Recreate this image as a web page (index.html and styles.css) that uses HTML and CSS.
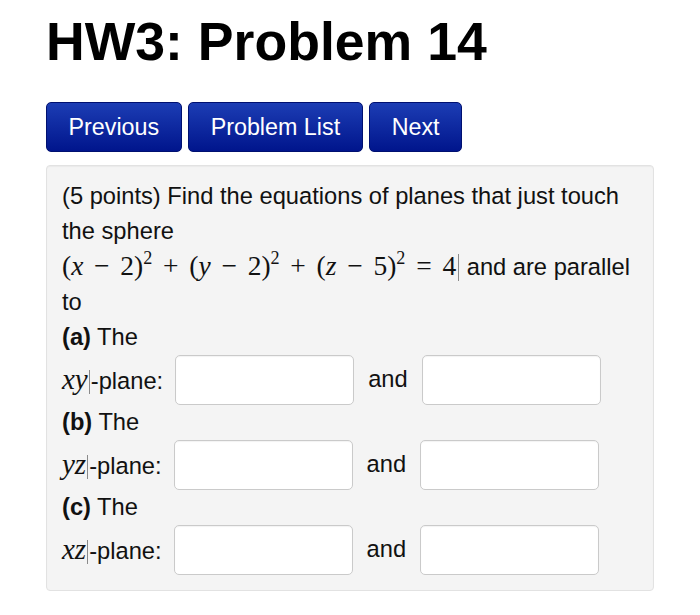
FILE: index.html
```html
<!DOCTYPE html>
<html lang="en">
<head>
<meta charset="utf-8">
<title>HW3: Problem 14</title>
<link rel="stylesheet" href="styles.css">
</head>
<body>
<div class="page">
  <h1 class="title">HW3: Problem 14</h1>
  <nav class="nav">
    <a class="btn" href="#">Previous</a>
    <a class="btn" href="#">Problem List</a>
    <a class="btn" href="#">Next</a>
  </nav>
  <div class="problem">
    <p class="text">(5 points) Find the equations of planes that just touch the sphere<br><span class="math">(<i>x</i><span class="op">−</span>2)<sup>2</sup><span class="op">+</span>(<i>y</i><span class="op">−</span>2)<sup>2</sup><span class="op">+</span>(<i>z</i><span class="op">−</span>5)<sup>2</sup><span class="op">=</span>4</span><span class="bar tall"></span> and are parallel to</p>
    <p class="text"><b>(a)</b> The</p>
    <div class="row">
      <span class="label"><span class="mvar">xy</span><span class="bar"></span>-plane:</span>
      <input class="field" type="text">
      <span class="and">and</span>
      <input class="field" type="text">
    </div>
    <p class="text"><b>(b)</b> The</p>
    <div class="row">
      <span class="label"><span class="mvar">yz</span><span class="bar"></span>-plane:</span>
      <input class="field" type="text">
      <span class="and">and</span>
      <input class="field" type="text">
    </div>
    <p class="text"><b>(c)</b> The</p>
    <div class="row">
      <span class="label"><span class="mvar">xz</span><span class="bar"></span>-plane:</span>
      <input class="field" type="text">
      <span class="and">and</span>
      <input class="field" type="text">
    </div>
  </div>
</div>
</body>
</html>
```
FILE: styles.css
```css
* { box-sizing: border-box; }
body {
  margin: 0;
  background: #fff;
  color: #111;
  font-family: "Liberation Sans", Arial, sans-serif;
}
.page {
  padding: 11px 46px 0 46px;
}
.title {
  margin: 0;
  font-size: 53.6px;
  line-height: 60px;
  font-weight: bold;
  color: #000;
}
.nav {
  display: flex;
  gap: 6.5px;
  margin-top: 31px;
}
.btn {
  display: block;
  height: 50px;
  padding: 0 21.5px;
  line-height: 48px;
  font-size: 23.3px;
  color: #fff;
  text-decoration: none;
  border: 1px solid #001070;
  border-radius: 5px;
  background: linear-gradient(#1c3db4, #00158c);
}
.problem {
  margin-top: 13px;
  background: #f4f4f4;
  border: 1px solid #e2e2e2;
  border-radius: 4px;
  box-shadow: inset 0 1px 1px rgba(0,0,0,0.04);
  padding: 13px 15px 15px 15px;
}
.text {
  margin: 0;
  font-size: 23.7px;
  line-height: 35px;
}
.math {
  font-family: "Liberation Serif", "Times New Roman", serif;
  font-size: 27.5px;
  line-height: 1;
  white-space: nowrap;
}
.math sup {
  font-size: 0.66em;
  line-height: 1;
  vertical-align: 0.6em;
}
.op {
  margin: 0 0.39em;
}
.bar {
  display: inline-block;
  width: 1px;
  height: 24px;
  background: #8a8a8a;
  vertical-align: -5px;
  margin: 0 1px;
}
.bar.tall {
  height: 27px;
  vertical-align: -6px;
  margin-left: 2px;
}
.row {
  display: flex;
  align-items: center;
  height: 50px;
  font-size: 23.7px;
}
.label {
  white-space: nowrap;
}
.mvar {
  font-family: "Liberation Serif", "Times New Roman", serif;
  font-style: italic;
  font-size: 29px;
}
.field {
  width: 179px;
  height: 50px;
  margin: 0 0 0 12px;
  border: 1px solid #cacaca;
  border-radius: 5px;
  background: #fff;
  box-shadow: inset 0 1px 1px rgba(0,0,0,0.05);
  font-size: 20px;
}
.and {
  margin: 0 2px 0 14px;
}
```
